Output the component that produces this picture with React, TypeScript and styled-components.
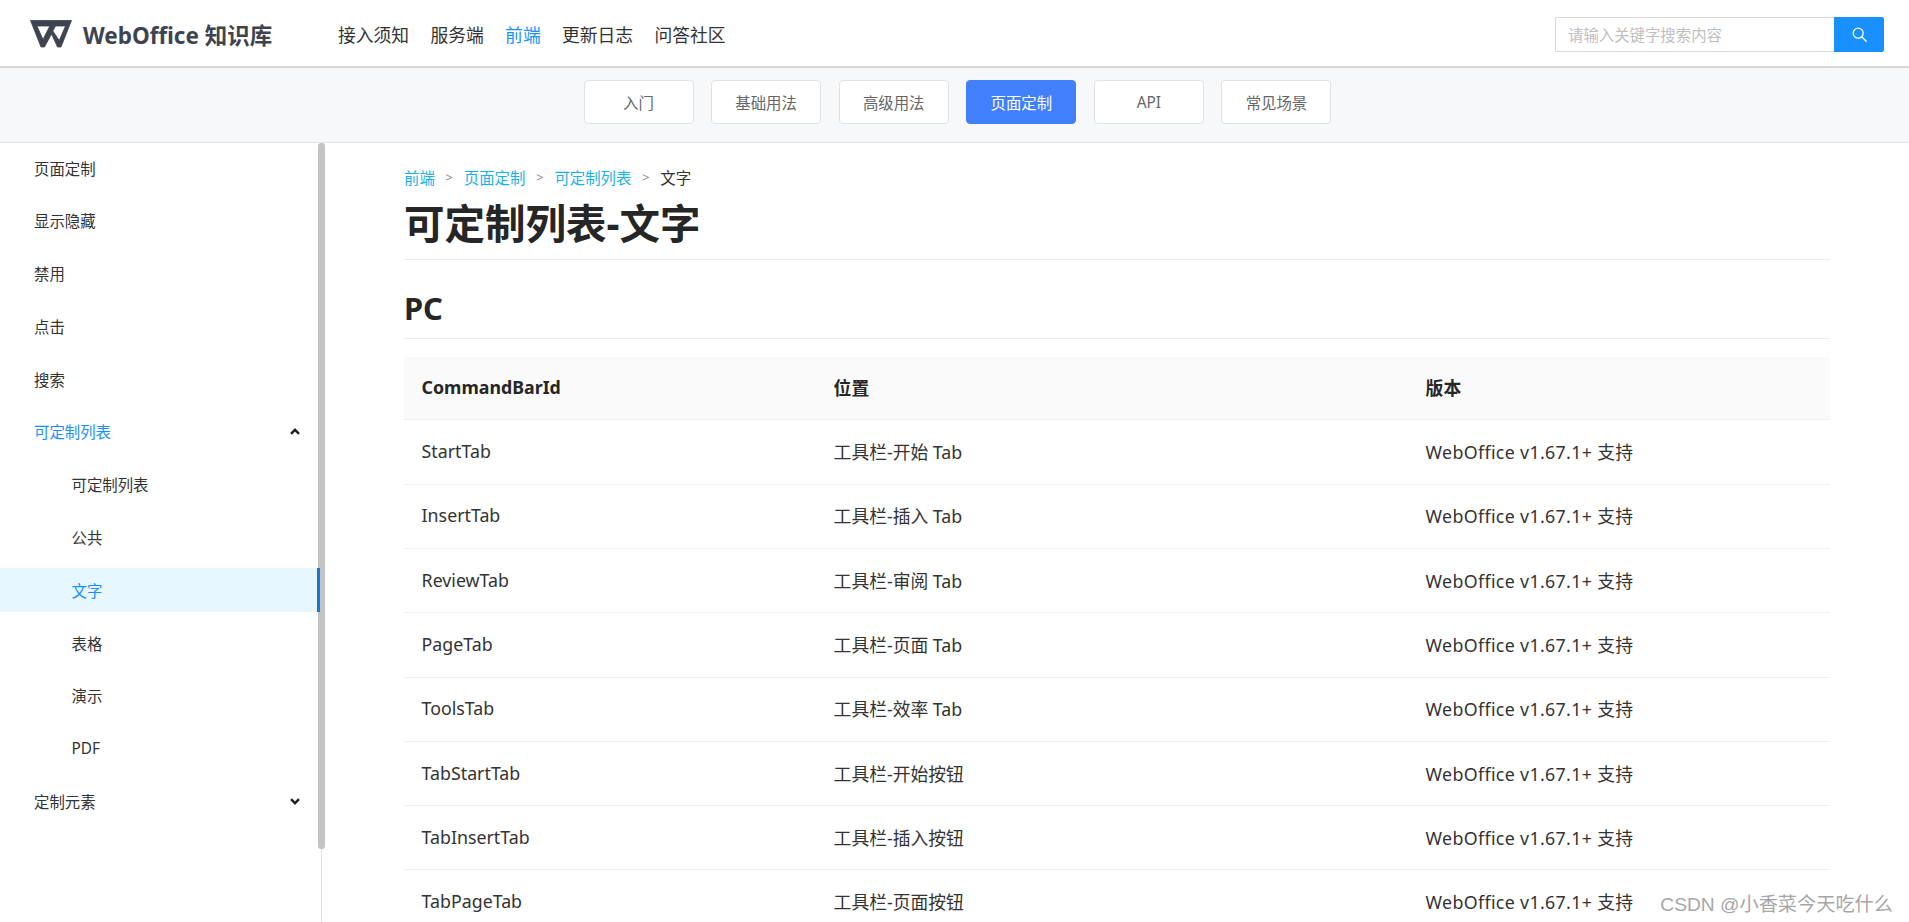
import React from "react";
import styled, { createGlobalStyle } from "styled-components";

const SANS = `"Noto Sans", "Noto Sans CJK SC", sans-serif`;

const GlobalStyle = createGlobalStyle`
  html, body {
    margin: 0;
    height: 100%;
    overflow: hidden;
    background: #fff;
    font-family: ${SANS};
    color: #333;
  }
  * {
    box-sizing: border-box;
  }
`;

const Page = styled("div")`
  height: 922px;
  display: flex;
  flex-direction: column;
  position: relative;
  overflow: hidden;
`;

const Header = styled("header")`
  height: 68px;
  flex: none;
  display: flex;
  align-items: center;
  padding: 2px 25px 0 30px;
  border-bottom: 2px solid #d9d9d9;
`;

const Brand = styled("div")`
  display: flex;
  align-items: center;
  gap: 11px;
  width: 308px;
  font-size: 22.5px;
  font-weight: 700;
  color: #3d4450;
`;

const MainNav = styled("nav")`
  display: flex;
  gap: 21.3px;
  flex: 1;
`;

const NavLink = styled("a")<{ $active?: boolean }>`
  font-size: 17.8px;
  color: ${(p) => (p.$active ? "#1890ff" : "#333")};
`;

const Search = styled("div")`
  display: flex;
  width: 329px;
  height: 35px;
`;

const SearchInput = styled("div")`
  flex: 1;
  display: flex;
  align-items: center;
  padding-left: 12px;
  border: 1px solid #d9d9d9;
  border-right: 0;
  border-radius: 2px 0 0 2px;
  font-size: 15.4px;
  color: #bfbfbf;
`;

const SearchButton = styled("div")`
  width: 50px;
  display: flex;
  align-items: center;
  justify-content: center;
  background: #1890ff;
  border-radius: 0 2px 2px 0;
`;

const SubNav = styled("div")`
  height: 75px;
  flex: none;
  display: flex;
  align-items: center;
  justify-content: center;
  gap: 17.6px;
  padding: 0 0 6px 6px;
  background: #f7f8fa;
  border-bottom: 1px solid #e5e6eb;
`;

const SubButton = styled("div")<{ $active?: boolean }>`
  width: 110px;
  height: 44px;
  display: flex;
  align-items: center;
  justify-content: center;
  border-radius: 4px;
  font-size: 15.4px;
  color: ${(p) => (p.$active ? "#fff" : "#666")};
  background: ${(p) => (p.$active ? "#417ffb" : "#fff")};
  border: 1px solid ${(p) => (p.$active ? "#417ffb" : "#e1e3e9")};
`;

const Body = styled("div")`
  flex: 1;
  display: flex;
  min-height: 0;
`;

const Sidebar = styled("aside")`
  width: 322px;
  flex: none;
  position: relative;
  padding-top: 3px;
  border-right: 1px solid #e3e3e3;
`;

const Scrollbar = styled("div")`
  position: absolute;
  top: 0;
  right: -4px;
  width: 7px;
  height: 706px;
  background: #c4c4c4;
  border-radius: 3px;
`;

const MenuItem = styled("div")<{ $nested?: boolean; $open?: boolean; $selected?: boolean }>`
  position: relative;
  height: 44px;
  margin: 0 1px 8.8px 0;
  display: flex;
  align-items: center;
  justify-content: space-between;
  padding: 0 20px 0 ${(p) => (p.$nested ? "71.5px" : "34px")};
  font-size: 15.4px;
  color: ${(p) => (p.$open || p.$selected ? "#1890ff" : "#333")};
  background: ${(p) => (p.$selected ? "#e6f7ff" : "transparent")};
  box-shadow: ${(p) => (p.$selected ? "inset -3px 0 0 #1677d9" : "none")};
`;

const Content = styled("main")`
  flex: 1;
  min-width: 0;
  padding: 23px 79px 0 82px;
`;

const Breadcrumb = styled("div")`
  display: flex;
  align-items: center;
  height: 22px;
  font-size: 15.4px;
  color: #333;
`;

const Crumb = styled("a")`
  color: #1ab0e8;
`;

const CrumbSep = styled("span")`
  width: 29px;
  text-align: center;
  font-size: 13px;
  color: #888;
`;

const Title = styled("h1")`
  margin: 8px 0 0;
  height: 64px;
  font-size: 40.5px;
  line-height: 56px;
  font-weight: 700;
  color: #262626;
  border-bottom: 1px solid #eaecef;
`;

const Subtitle = styled("h2")`
  margin: 26px 0 18px;
  height: 53px;
  font-size: 30.8px;
  line-height: 44px;
  font-weight: 700;
  color: #262626;
  border-bottom: 1px solid #eaecef;
`;

const Table = styled("div")`
  display: flex;
  flex-direction: column;
`;

const Row = styled("div")<{ $head?: boolean }>`
  height: ${(p) => (p.$head ? "63.4px" : "64.3px")};
  flex: none;
  display: grid;
  grid-template-columns: 412px 592px 1fr;
  align-items: center;
  padding: 0 0 2px 17.6px;
  font-size: 17.8px;
  font-weight: ${(p) => (p.$head ? 700 : 400)};
  color: ${(p) => (p.$head ? "#262626" : "#333")};
  background: ${(p) => (p.$head ? "#fafafa" : "transparent")};
  border-bottom: 1px solid #f0f0f0;
`;

const VersionCell = styled("span")`
  letter-spacing: 0.34px;
`;

const Watermark = styled("div")`
  position: absolute;
  right: 16px;
  bottom: 5px;
  font-family: "Liberation Sans", "Noto Sans CJK SC", sans-serif;
  font-size: 19.2px;
  color: rgba(120, 120, 120, 0.68);
  text-shadow: 0 0 2px rgba(255, 255, 255, 0.9);
`;

const Logo = () => (
  <svg width="42" height="28" viewBox="0 0 42 28">
    <path
      fillRule="evenodd"
      d="M0.5 0.5H41.5L31 27H27.5L21.5 14L14.5 27H11ZM7 6L13 19.5L19.8 6ZM25.5 6L22.8 11L29.2 20.5L35.5 6Z"
      fill="#3d4450"
      stroke="#3d4450"
      strokeWidth="0.8"
      strokeLinejoin="round"
    />
  </svg>
);

const SearchIcon = () => (
  <svg width="15" height="15" viewBox="0 0 15 15" fill="none" stroke="#fff" strokeWidth="1.3">
    <circle cx="6.2" cy="6.2" r="5" />
    <path d="M10 10l4.2 4.2" strokeLinecap="round" />
  </svg>
);

const Chevron = ({ up }: { up?: boolean }) => (
  <svg width="10" height="7" viewBox="0 0 10 7" fill="none" stroke="#222" strokeWidth="2.4">
    <path d={up ? "M1 5.8L5 1.8l4 4" : "M1 1.2l4 4 4-4"} />
  </svg>
);

const navLinks = ["接入须知", "服务端", "前端", "更新日志", "问答社区"];
const subLinks = ["入门", "基础用法", "高级用法", "页面定制", "API", "常见场景"];

const rows = [
  ["StartTab", "工具栏-开始 Tab"],
  ["InsertTab", "工具栏-插入 Tab"],
  ["ReviewTab", "工具栏-审阅 Tab"],
  ["PageTab", "工具栏-页面 Tab"],
  ["ToolsTab", "工具栏-效率 Tab"],
  ["TabStartTab", "工具栏-开始按钮"],
  ["TabInsertTab", "工具栏-插入按钮"],
  ["TabPageTab", "工具栏-页面按钮"]
];

export default function App() {
  return (
    <Page>
      <GlobalStyle />
      <Header>
        <Brand>
          <Logo />
          WebOffice 知识库
        </Brand>
        <MainNav>
          {navLinks.map((link) => (
            <NavLink key={link} $active={link === "前端"}>
              {link}
            </NavLink>
          ))}
        </MainNav>
        <Search>
          <SearchInput>请输入关键字搜索内容</SearchInput>
          <SearchButton>
            <SearchIcon />
          </SearchButton>
        </Search>
      </Header>
      <SubNav>
        {subLinks.map((link) => (
          <SubButton key={link} $active={link === "页面定制"}>
            {link}
          </SubButton>
        ))}
      </SubNav>
      <Body>
        <Sidebar>
          <Scrollbar />
          <MenuItem>页面定制</MenuItem>
          <MenuItem>显示隐藏</MenuItem>
          <MenuItem>禁用</MenuItem>
          <MenuItem>点击</MenuItem>
          <MenuItem>搜索</MenuItem>
          <MenuItem $open>
            可定制列表
            <Chevron up />
          </MenuItem>
          <MenuItem $nested>可定制列表</MenuItem>
          <MenuItem $nested>公共</MenuItem>
          <MenuItem $nested $selected>
            文字
          </MenuItem>
          <MenuItem $nested>表格</MenuItem>
          <MenuItem $nested>演示</MenuItem>
          <MenuItem $nested>PDF</MenuItem>
          <MenuItem>
            定制元素
            <Chevron />
          </MenuItem>
        </Sidebar>
        <Content>
          <Breadcrumb>
            <Crumb>前端</Crumb>
            <CrumbSep>&gt;</CrumbSep>
            <Crumb>页面定制</Crumb>
            <CrumbSep>&gt;</CrumbSep>
            <Crumb>可定制列表</Crumb>
            <CrumbSep>&gt;</CrumbSep>
            <span>文字</span>
          </Breadcrumb>
          <Title>可定制列表-文字</Title>
          <Subtitle>PC</Subtitle>
          <Table>
            <Row $head>
              <span>CommandBarId</span>
              <span>位置</span>
              <span>版本</span>
            </Row>
            {rows.map(([id, place]) => (
              <Row key={id}>
                <span>{id}</span>
                <span>{place}</span>
                <VersionCell>WebOffice v1.67.1+ 支持</VersionCell>
              </Row>
            ))}
          </Table>
        </Content>
      </Body>
      <Watermark>CSDN @小香菜今天吃什么</Watermark>
    </Page>
  );
}
